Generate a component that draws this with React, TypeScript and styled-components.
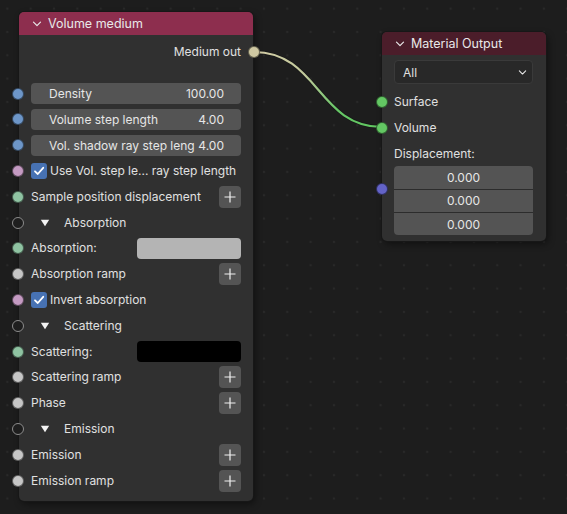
import React from "react";
import styled, { createGlobalStyle } from "styled-components";

const Global = createGlobalStyle`
  html, body { margin: 0; padding: 0; background: #1d1d1d; }
  body { font-family: Inter, "DejaVu Sans", sans-serif; }
`;

const Canvas = styled.div`
  position: relative;
  width: 567px;
  height: 514px;
  overflow: hidden;
  background-color: #1d1d1d;
  background-image: radial-gradient(circle, #292929 0 1px, transparent 1.6px);
  background-size: 23.33px 23.33px;
  background-position: 19px 20.3px;
  font-family: Inter, "DejaVu Sans", sans-serif;
  font-size: 12px;
  color: #e0e0e0;
`;

const Links = styled.svg`
  position: absolute;
  inset: 0;
  pointer-events: none;
`;

const Node = styled.div<{ $x: number; $y: number; $w: number }>`
  position: absolute;
  left: ${(p) => p.$x}px;
  top: ${(p) => p.$y}px;
  width: ${(p) => p.$w}px;
  display: flex;
  flex-direction: column;
  background: #303030;
  border-radius: 5px;
  box-shadow: 0 0 0 1px #171717, 2px 3px 7px rgba(0, 0, 0, 0.45);
`;

const Header = styled.div<{ $bg: string }>`
  height: 23px;
  display: flex;
  align-items: center;
  gap: 6px;
  padding-left: 13px;
  background: ${(p) => p.$bg};
  border-radius: 5px 5px 0 0;
  color: #e8e8e8;
  font-size: 12.5px;
`;

const Body = styled.div<{ $pad: string }>`
  display: flex;
  flex-direction: column;
  padding: ${(p) => p.$pad};
`;

const Row = styled.div<{ $end?: boolean }>`
  position: relative;
  height: 25.8px;
  display: flex;
  align-items: center;
  justify-content: ${(p) => (p.$end ? "flex-end" : "space-between")};
  padding: 0 12px;
  white-space: nowrap;
  line-height: 1;
  & > span:first-of-type { padding-top: 1px; }
`;

const Spacer = styled.div<{ $h: number }>`
  height: ${(p) => p.$h}px;
`;

const Socket = styled.span<{
  $color: string;
  $hollow?: boolean;
  $side: "left" | "right";
  $offset?: number;
  $top?: number;
}>`
  position: absolute;
  top: ${(p) => (p.$top !== undefined ? `${p.$top}px` : "50%")};
  ${(p) => `${p.$side}: ${p.$offset ?? -7}px;`}
  width: 12px;
  height: 12px;
  box-sizing: border-box;
  border-radius: 50%;
  transform: translateY(-50%);
  background: ${(p) => (p.$hollow ? "#1e1e1e" : p.$color)};
  border: 1px solid ${(p) => (p.$hollow ? "#8c8c8c" : "rgba(0,0,0,0.5)")};
`;

const NumField = styled.div`
  flex: 1;
  height: 21px;
  display: flex;
  align-items: center;
  justify-content: space-between;
  padding: 1px 17px 0 18px;
  box-sizing: border-box;
  background: #545454;
  border-radius: 4px;
  color: #e6e6e6;
`;

const Check = styled.span`
  width: 16px;
  height: 16px;
  margin-right: 3px;
  display: inline-flex;
  align-items: center;
  justify-content: center;
  background: #4772b3;
  border-radius: 3px;
  flex: none;
`;

const CheckLabel = styled.div`
  display: flex;
  align-items: center;
  flex: 1;
`;

const PlusButton = styled.span`
  width: 22px;
  height: 22px;
  display: inline-flex;
  align-items: center;
  justify-content: center;
  background: #545454;
  border-radius: 4px;
`;

const Swatch = styled.span<{ $color: string }>`
  width: 104px;
  height: 21px;
  background: ${(p) => p.$color};
  border-radius: 4px;
`;

const PanelTitle = styled.div`
  display: flex;
  align-items: center;
  gap: 14px;
  padding-left: 9px;
`;

const Dropdown = styled.div`
  height: 24px;
  margin: 0 13px 0 12px;
  box-sizing: border-box;
  display: flex;
  align-items: center;
  justify-content: space-between;
  padding: 0 5px 0 8px;
  background: #282828;
  border: 1px solid #3a3a3a;
  border-radius: 4px;
`;

const Block = styled.div`
  position: relative;
`;

const VectorStack = styled.div`
  display: flex;
  flex-direction: column;
  margin: 0 13px 0 12px;
  border-radius: 4px;
  overflow: hidden;
  background: #2c2c2c;
  gap: 1px;
`;

const VectorCell = styled.div`
  height: 22.3px;
  display: flex;
  align-items: center;
  justify-content: center;
  background: #545454;
  color: #e6e6e6;
`;

const Chevron = ({ size = 10 }: { size?: number }) => (
  <svg width={size} height={size} viewBox="0 0 10 10" fill="none">
    <path d="M1.5 3.2 L5 6.7 L8.5 3.2" stroke="#e8e8e8" strokeWidth="1.2" strokeLinecap="round" strokeLinejoin="round" />
  </svg>
);

const Plus = () => (
  <svg width="12" height="12" viewBox="0 0 12 12">
    <path d="M6 0.5 V11.5 M0.5 6 H11.5" stroke="#f0f0f0" strokeWidth="1.2" />
  </svg>
);

const Tick = () => (
  <svg width="12" height="12" viewBox="0 0 12 12" fill="none">
    <path d="M2 6.3 L4.8 9 L10.2 2.8" stroke="#ffffff" strokeWidth="1.8" strokeLinecap="round" strokeLinejoin="round" />
  </svg>
);

const Triangle = () => (
  <svg width="10" height="8" viewBox="0 0 10 8">
    <path d="M0.8 0.8 H9.2 L5 7.3 Z" fill="#f2f2f2" />
  </svg>
);

const SOCK = {
  float: "#6d96c8",
  bool: "#c49ac2",
  vec: "#8fc3a2",
  grey: "#c6c6c6",
  medium: "#cfc8a2",
  shader: "#63c763",
  vector: "#6363c7",
};

type Entry =
  | { kind: "num"; label: string; value: string; color: string }
  | { kind: "check"; label: string; color: string }
  | { kind: "plus"; label: string; color: string }
  | { kind: "panel"; label: string }
  | { kind: "swatch"; label: string; swatch: string; color: string };

const entries: Entry[] = [
  { kind: "num", label: "Density", value: "100.00", color: SOCK.float },
  { kind: "num", label: "Volume step length", value: "4.00", color: SOCK.float },
  { kind: "num", label: "Vol. shadow ray step leng", value: "4.00", color: SOCK.float },
  { kind: "check", label: "Use Vol. step le... ray step length", color: SOCK.bool },
  { kind: "plus", label: "Sample position displacement", color: SOCK.vec },
  { kind: "panel", label: "Absorption" },
  { kind: "swatch", label: "Absorption:", swatch: "#b4b4b4", color: SOCK.vec },
  { kind: "plus", label: "Absorption ramp", color: SOCK.grey },
  { kind: "check", label: "Invert absorption", color: SOCK.bool },
  { kind: "panel", label: "Scattering" },
  { kind: "swatch", label: "Scattering:", swatch: "#000000", color: SOCK.vec },
  { kind: "plus", label: "Scattering ramp", color: SOCK.grey },
  { kind: "plus", label: "Phase", color: SOCK.grey },
  { kind: "panel", label: "Emission" },
  { kind: "plus", label: "Emission", color: SOCK.grey },
  { kind: "plus", label: "Emission ramp", color: SOCK.grey },
];

const renderEntry = (e: Entry, i: number) => {
  switch (e.kind) {
    case "num":
      return (
        <Row key={i}>
          <Socket $side="left" $color={e.color} />
          <NumField>
            <span>{e.label}</span>
            <span>{e.value}</span>
          </NumField>
        </Row>
      );
    case "check":
      return (
        <Row key={i}>
          <Socket $side="left" $color={e.color} />
          <CheckLabel>
            <Check>
              <Tick />
            </Check>
            <span>{e.label}</span>
          </CheckLabel>
        </Row>
      );
    case "plus":
      return (
        <Row key={i}>
          <Socket $side="left" $color={e.color} />
          <span>{e.label}</span>
          <PlusButton>
            <Plus />
          </PlusButton>
        </Row>
      );
    case "panel":
      return (
        <Row key={i}>
          <Socket $side="left" $color="" $hollow />
          <PanelTitle>
            <Triangle />
            <span>{e.label}</span>
          </PanelTitle>
        </Row>
      );
    case "swatch":
      return (
        <Row key={i}>
          <Socket $side="left" $color={e.color} />
          <span>{e.label}</span>
          <Swatch $color={e.swatch} />
        </Row>
      );
  }
};

export default function App() {
  return (
    <>
      <Global />
      <Canvas>
        <Links width="567" height="514">
          <defs>
            <linearGradient id="mediumLink" gradientUnits="userSpaceOnUse" x1="254" y1="0" x2="382" y2="0">
              <stop offset="0" stopColor="#d3cca6" />
              <stop offset="0.4" stopColor="#c2c99c" />
              <stop offset="0.65" stopColor="#66c666" />
              <stop offset="1" stopColor="#5fc65f" />
            </linearGradient>
          </defs>
          <path d="M254 52 C 318 52, 318 127, 382 127" stroke="#111" strokeWidth="3.6" fill="none" opacity="0.5" />
          <path d="M254 52 C 318 52, 318 127, 382 127" stroke="url(#mediumLink)" strokeWidth="2.2" fill="none" />
        </Links>

        <Node $x={19} $y={12} $w={234}>
          <Header $bg="#8d2e4e">
            <Chevron />
            <span>Volume medium</span>
          </Header>
          <Body $pad="4px 0 7px">
            <Row $end>
              <span>Medium out</span>
              <Socket $side="right" $color={SOCK.medium} />
            </Row>
            <Spacer $h={16} />
            {entries.map(renderEntry)}
          </Body>
        </Node>

        <Node $x={382} $y={32} $w={164}>
          <Header $bg="#4b1d2a">
            <Chevron />
            <span>Material Output</span>
          </Header>
          <Body $pad="5px 0 6px">
            <Dropdown>
              <span>All</span>
              <Chevron size={9} />
            </Dropdown>
            <Spacer $h={5} />
            <Row>
              <Socket $side="left" $offset={-6} $color={SOCK.shader} />
              <span>Surface</span>
            </Row>
            <Row>
              <Socket $side="left" $offset={-6} $color={SOCK.shader} />
              <span>Volume</span>
            </Row>
            <Row>
              <span>Displacement:</span>
            </Row>
            <Block>
              <Socket $side="left" $offset={-6} $color={SOCK.vector} $top={22.5} />
              <VectorStack>
                <VectorCell>0.000</VectorCell>
                <VectorCell>0.000</VectorCell>
                <VectorCell>0.000</VectorCell>
              </VectorStack>
            </Block>
          </Body>
        </Node>
      </Canvas>
    </>
  );
}
